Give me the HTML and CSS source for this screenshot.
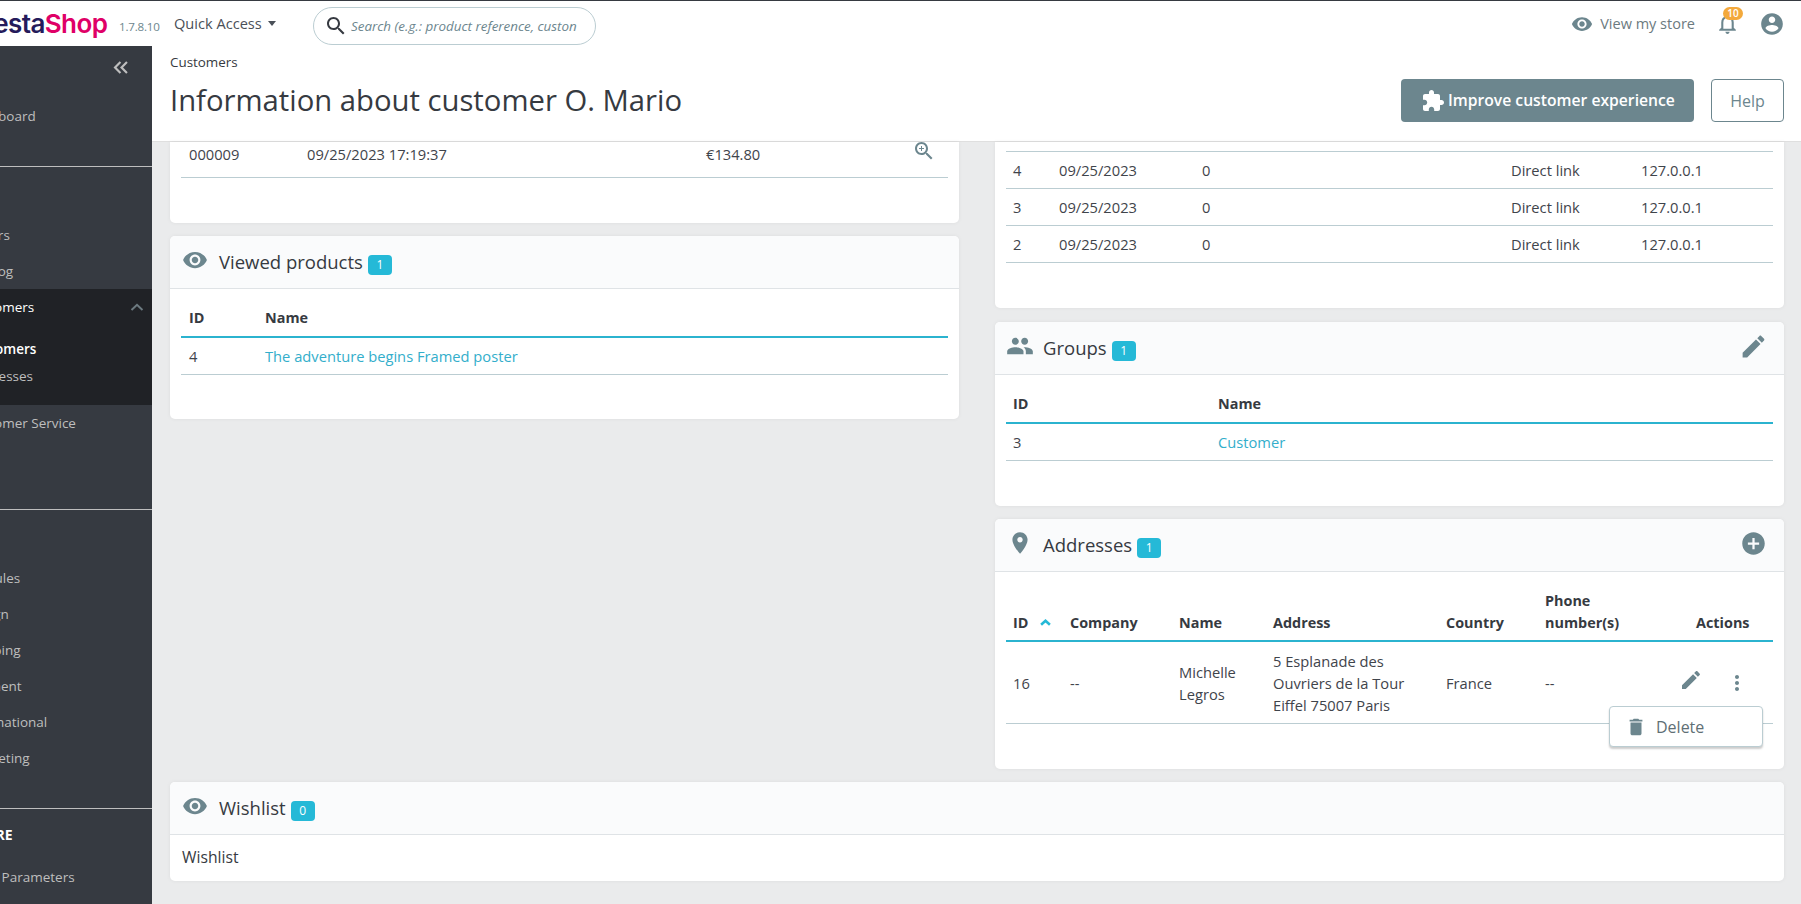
FILE: index.html
```html
<!DOCTYPE html>
<html lang="en">
<head>
<meta charset="utf-8">
<title>Information about customer O. Mario</title>
<link rel="stylesheet" href="styles.css">
</head>
<body>
<header class="topbar">
  <div class="logo"><span class="logo-a">Presta</span><span class="logo-b">Shop</span></div>
  <span class="version">1.7.8.10</span>
  <span class="quick">Quick Access<i class="caret"></i></span>
  <div class="search">
    <svg class="search-ico" viewBox="0 0 24 24"><path d="M15.5 14h-.79l-.28-.27C15.41 12.59 16 11.11 16 9.5 16 5.91 13.09 3 9.5 3S3 5.91 3 9.5 5.91 16 9.5 16c1.61 0 3.09-.59 4.23-1.57l.27.28v.79l5 4.99L20.49 19l-4.99-5zm-6 0C7.01 14 5 11.99 5 9.5S7.01 5 9.5 5 14 7.01 14 9.5 11.99 14 9.5 14z"/></svg>
    <span class="search-text">Search (e.g.: product reference, custon</span>
  </div>
  <div class="top-right">
    <svg class="store-ico" viewBox="0 0 24 24"><path d="M12 4.5C7 4.5 2.73 7.61 1 12c1.73 4.39 6 7.5 11 7.5s9.27-3.11 11-7.5c-1.73-4.39-6-7.5-11-7.5zM12 17c-2.76 0-5-2.24-5-5s2.24-5 5-5 5 2.24 5 5-2.24 5-5 5zm0-8c-1.66 0-3 1.34-3 3s1.34 3 3 3 3-1.34 3-3-1.34-3-3-3z"/></svg>
    <span class="store">View my store</span>
    <div class="bell">
      <svg class="bell-ico" viewBox="0 0 24 24"><path d="M12 22c1.1 0 2-.9 2-2h-4c0 1.1.9 2 2 2zm6-6v-5c0-3.07-1.63-5.64-4.5-6.32V4c0-.83-.67-1.5-1.5-1.5s-1.5.67-1.5 1.5v.68C7.64 5.36 6 7.92 6 11v5l-2 2v1h16v-1l-2-2zm-2 1H8v-6c0-2.48 1.51-4.5 4-4.5s4 2.02 4 4.5v6z"/></svg>
      <span class="bell-badge">10</span>
    </div>
    <svg class="account" viewBox="0 0 24 24"><path d="M12 2C6.48 2 2 6.48 2 12s4.48 10 10 10 10-4.48 10-10S17.52 2 12 2zm0 3c1.66 0 3 1.34 3 3s-1.34 3-3 3-3-1.34-3-3 1.34-3 3-3zm0 14.2c-2.5 0-4.71-1.28-6-3.22.03-1.99 4-3.08 6-3.08 1.99 0 5.97 1.09 6 3.08-1.29 1.94-3.5 3.22-6 3.22z"/></svg>
  </div>
</header>
<div class="app">
  <nav class="sidebar">
    <div class="toggle">
      <svg class="toggle-ico" viewBox="0 0 14 12"><path d="M6.5 1 1.5 6l5 5M12.5 1l-5 5 5 5"/></svg>
    </div>
    <ul class="menu">
      <li class="item first">Dashboard</li>
      <li class="rule"></li>
      <li class="head">SELL</li>
      <li class="item">Orders</li>
      <li class="item">Catalog</li>
      <li class="open">
        <div class="item item-open">Customers<svg class="chev" viewBox="0 0 14 8"><path d="M1.5 7 7 1.8 12.5 7"/></svg></div>
        <div class="sub sub-first sub-on">Customers</div>
        <div class="sub">Addresses</div>
      </li>
      <li class="item">Customer Service</li>
      <li class="item">Stats</li>
      <li class="rule"></li>
      <li class="head">IMPROVE</li>
      <li class="item">Modules</li>
      <li class="item">Design</li>
      <li class="item">Shipping</li>
      <li class="item">Payment</li>
      <li class="item">International</li>
      <li class="item">Marketing</li>
      <li class="rule"></li>
      <li class="head">CONFIGURE</li>
      <li class="item">Shop Parameters</li>
    </ul>
  </nav>
  <main class="main">
    <section class="pagehead">
      <div class="pagehead-text">
        <div class="crumb">Customers</div>
        <h1 class="title">Information about customer O. Mario</h1>
      </div>
      <div class="actions">
        <a class="btn btn-fill">
          <svg class="btn-ico" viewBox="0 0 24 24"><path d="M20.5 11H19V7c0-1.1-.9-2-2-2h-4V3.5C13 2.12 11.88 1 10.5 1S8 2.12 8 3.5V5H4c-1.1 0-1.99.9-1.99 2v3.8H3.5c1.49 0 2.7 1.21 2.7 2.7s-1.21 2.7-2.7 2.7H2V20c0 1.1.9 2 2 2h3.8v-1.5c0-1.49 1.21-2.7 2.7-2.7 1.49 0 2.7 1.21 2.7 2.7V22H17c1.1 0 2-.9 2-2v-4h1.5c1.38 0 2.5-1.12 2.5-2.5S21.88 11 20.5 11z"/></svg>
          <span class="btn-text">Improve customer experience</span>
        </a>
        <a class="btn btn-line">Help</a>
      </div>
    </section>
    <div class="content">
      <div class="col">
        <section class="card card-cut card-a">
          <table class="tbl tbl-orders">
            <colgroup><col class="oa"><col class="ob"><col class="oc"><col></colgroup>
            <tr class="cut-row">
              <td>000009</td><td>09/25/2023 17:19:37</td><td>€134.80</td>
              <td class="zoom-cell"><svg class="zoom-ico" viewBox="0 0 24 24"><path d="M15.5 14h-.79l-.28-.27C15.41 12.59 16 11.11 16 9.5 16 5.91 13.09 3 9.5 3S3 5.91 3 9.5 5.91 16 9.5 16c1.61 0 3.09-.59 4.23-1.57l.27.28v.79l5 4.99L20.49 19l-4.99-5zm-6 0C7.01 14 5 11.99 5 9.5S7.01 5 9.5 5 14 7.01 14 9.5 11.99 14 9.5 14z"/><path d="M12 10h-2v2H9v-2H7V9h2V7h1v2h2v1z"/></svg></td>
            </tr>
          </table>
        </section>
        <section class="card card-b">
          <div class="card-head">
            <span class="ico-box"><svg class="ico" viewBox="0 0 24 24"><path d="M12 4.5C7 4.5 2.73 7.61 1 12c1.73 4.39 6 7.5 11 7.5s9.27-3.11 11-7.5c-1.73-4.39-6-7.5-11-7.5zM12 17c-2.76 0-5-2.24-5-5s2.24-5 5-5 5 2.24 5 5-2.24 5-5 5zm0-8c-1.66 0-3 1.34-3 3s1.34 3 3 3 3-1.34 3-3-1.34-3-3-3z"/></svg></span>
            <h2 class="card-title">Viewed products</h2><span class="badge">1</span>
          </div>
          <table class="tbl tbl-viewed">
            <colgroup><col class="va"><col></colgroup>
            <tr class="th-row"><th>ID</th><th>Name</th></tr>
            <tr class="row"><td>4</td><td><a class="link">The adventure begins Framed poster</a></td></tr>
          </table>
        </section>
      </div>
      <div class="col col-right">
        <section class="card card-cut card-c">
          <table class="tbl tbl-visits">
            <colgroup><col class="ca"><col class="cb"><col class="cc"><col class="cd"><col></colgroup>
            <tr class="row"><td>4</td><td>09/25/2023</td><td>0</td><td>Direct link</td><td>127.0.0.1</td></tr>
            <tr class="row"><td>3</td><td>09/25/2023</td><td>0</td><td>Direct link</td><td>127.0.0.1</td></tr>
            <tr class="row"><td>2</td><td>09/25/2023</td><td>0</td><td>Direct link</td><td>127.0.0.1</td></tr>
          </table>
        </section>
        <section class="card card-d">
          <div class="card-head">
            <span class="ico-box"><svg class="ico ico-md" viewBox="0 0 24 24"><path d="M16 11c1.66 0 2.99-1.34 2.99-3S17.66 5 16 5c-1.66 0-3 1.34-3 3s1.34 3 3 3zm-8 0c1.66 0 2.99-1.34 2.99-3S9.66 5 8 5C6.34 5 5 6.34 5 8s1.34 3 3 3zm0 2c-2.33 0-7 1.17-7 3.5V19h14v-2.5c0-2.33-4.67-3.5-7-3.5zm8 0c-.29 0-.62.02-.97.05 1.16.84 1.97 1.97 1.97 3.45V19h6v-2.5c0-2.33-4.67-3.5-7-3.5z"/></svg></span>
            <h2 class="card-title">Groups</h2><span class="badge">1</span>
            <span class="head-action"><svg class="ico ico-lg" viewBox="0 0 24 24"><path d="M3 17.25V21h3.75L17.81 9.94l-3.75-3.75L3 17.25zM20.71 7.04c.39-.39.39-1.02 0-1.41l-2.34-2.34c-.39-.39-1.02-.39-1.41 0l-1.83 1.83 3.75 3.75 1.83-1.83z"/></svg></span>
          </div>
          <table class="tbl tbl-groups">
            <colgroup><col class="ga"><col></colgroup>
            <tr class="th-row"><th>ID</th><th>Name</th></tr>
            <tr class="row"><td>3</td><td><a class="link">Customer</a></td></tr>
          </table>
        </section>
        <section class="card card-e">
          <div class="card-head">
            <span class="ico-box"><svg class="ico" viewBox="0 0 24 24"><path d="M12 2C8.13 2 5 5.13 5 9c0 5.25 7 13 7 13s7-7.75 7-13c0-3.87-3.13-7-7-7zm0 9.5c-1.38 0-2.5-1.12-2.5-2.5s1.12-2.5 2.5-2.5 2.5 1.12 2.5 2.5-1.12 2.5-2.5 2.5z"/></svg></span>
            <h2 class="card-title">Addresses</h2><span class="badge">1</span>
            <span class="head-action"><svg class="ico ico-plus" viewBox="0 0 24 24"><path d="M12 2C6.48 2 2 6.48 2 12s4.48 10 10 10 10-4.48 10-10S17.52 2 12 2zm5 11h-4v4h-2v-4H7v-2h4V7h2v4h4v2z"/></svg></span>
          </div>
          <table class="tbl tbl-addr">
            <colgroup><col class="aa"><col class="ab"><col class="ac"><col class="ad"><col class="ae"><col class="af"><col></colgroup>
            <tr class="th-row th-tall">
              <th class="sorted">ID<svg class="sort" viewBox="0 0 10 6"><path d="M1 5 5 1.5 9 5"/></svg></th><th>Company</th><th>Name</th><th>Address</th><th>Country</th><th>Phone<br>number(s)</th><th class="th-actions">Actions</th>
            </tr>
            <tr class="row row-addr">
              <td>16</td><td>--</td><td>Michelle Legros</td><td>5 Esplanade des Ouvriers de la Tour Eiffel 75007 Paris</td><td>France</td><td>--</td>
              <td>
                <div class="row-actions">
                  <svg class="act-ico act-edit" viewBox="0 0 24 24"><path d="M3 17.25V21h3.75L17.81 9.94l-3.75-3.75L3 17.25zM20.71 7.04c.39-.39.39-1.02 0-1.41l-2.34-2.34c-.39-.39-1.02-.39-1.41 0l-1.83 1.83 3.75 3.75 1.83-1.83z"/></svg>
                  <svg class="act-ico" viewBox="0 0 24 24"><path d="M12 8c1.1 0 2-.9 2-2s-.9-2-2-2-2 .9-2 2 .9 2 2 2zm0 2c-1.1 0-2 .9-2 2s.9 2 2 2 2-.9 2-2-.9-2-2-2zm0 6c-1.1 0-2 .9-2 2s.9 2 2 2 2-.9 2-2-.9-2-2-2z"/></svg>
                </div>
              </td>
            </tr>
          </table>
          <div class="popup">
            <svg class="popup-ico" viewBox="0 0 24 24"><path d="M6 19c0 1.1.9 2 2 2h8c1.1 0 2-.9 2-2V7H6v12zM19 4h-3.5l-1-1h-5l-1 1H5v2h14V4z"/></svg>
            <span class="popup-text">Delete</span>
          </div>
        </section>
      </div>
      <section class="card card-wish">
        <div class="card-head">
          <span class="ico-box"><svg class="ico" viewBox="0 0 24 24"><path d="M12 4.5C7 4.5 2.73 7.61 1 12c1.73 4.39 6 7.5 11 7.5s9.27-3.11 11-7.5c-1.73-4.39-6-7.5-11-7.5zM12 17c-2.76 0-5-2.24-5-5s2.24-5 5-5 5 2.24 5 5-2.24 5-5 5zm0-8c-1.66 0-3 1.34-3 3s1.34 3 3 3 3-1.34 3-3-1.34-3-3-3z"/></svg></span>
          <h2 class="card-title">Wishlist</h2><span class="badge">0</span>
        </div>
        <div class="wish-body">Wishlist</div>
      </section>
    </div>
  </main>
</div>
</body>
</html>
```
FILE: styles.css
```css
* { box-sizing: border-box; }
html, body { margin: 0; height: 100%; }
body {
  display: flex; flex-direction: column; height: 904px; overflow: hidden;
  font-family: "Open Sans", sans-serif; font-size: 14px; color: #363a41; background: #eaebec;
}
svg { display: block; fill: #6c868e; flex: none; }

/* top bar */
.topbar {
  flex: none; height: 46px; background: #fff; border-top: 1px solid #363a41;
  display: flex; align-items: center; overflow: hidden; position: relative;
}
.logo { margin-left: -32px; width: 139px; flex: none; font-family: Inter, sans-serif; font-size: 26px; font-weight: 600; letter-spacing: -.6px; line-height: 46px; white-space: nowrap; }
.logo-a { color: #251b5b; }
.logo-b { color: #df0067; }
.version { width: 55px; flex: none; margin-left: 12px; margin-top: 5px; font-size: 11.6px; letter-spacing: -.2px; color: #6c868e; }
.quick { width: 139px; flex: none; font-size: 14.6px; color: #4a5058; display: flex; align-items: center; margin-top: -1px; }
.caret { margin-left: 6px; width: 0; height: 0; border: 4.5px solid transparent; border-top: 5px solid #4a5058; border-bottom: 0; }
.search {
  flex: none; width: 283px; height: 38px; border: 1px solid #bbcdd2; border-radius: 19px;
  display: flex; align-items: center; padding-left: 10px; margin-top: 4px;
}
.search-ico { width: 24px; height: 24px; fill: #363a41; }
.search-text { margin-left: 3px; font-size: 13.4px; font-style: italic; color: #6c868e; white-space: nowrap; overflow: hidden; width: 227px; }
.top-right { margin-left: auto; display: flex; align-items: center; margin-right: 16px; }
.store-ico { width: 22px; height: 22px; margin-right: 7px; }
.store { font-size: 14.5px; color: #6c7a80; margin-right: 20px; }
.bell { position: relative; width: 26px; height: 25px; margin-right: 18px; }
.bell-ico { width: 25px; height: 25px; }
.bell-badge {
  position: absolute; left: 8px; top: -4px; width: 20px; height: 13px; border-radius: 7px;
  background: #f3a93c; color: #fff; font-size: 10px; line-height: 13px; text-align: center; font-weight: 600;
}
.account { width: 26px; height: 26px; }

/* layout */
.app { flex: 1; min-height: 0; display: flex; }
.sidebar { flex: none; width: 152px; background: #363a41; overflow: hidden; color: #bebebe; }
.toggle { height: 43px; margin-bottom: -2px; display: flex; align-items: center; justify-content: flex-end; padding-right: 23px; }
.toggle-ico { width: 16px; height: 13px; fill: none; stroke: #bebebe; stroke-width: 2; }
.menu { list-style: none; margin: 0; padding: 0; white-space: nowrap; }
.item { height: 36px; line-height: 36px; margin-left: -34px; font-size: 13.5px; }
.first { margin-top: 11px; }
.rule { height: 1px; background: #bebebe; margin-top: 32px; }
.head { height: 50px; line-height: 52px; margin-left: -69px; font-weight: 700; color: #fff; }
.open { background: #202226; height: 116px; }
.item-open { color: #fff; font-weight: 500; position: relative; display: flex; align-items: center; }
.chev { width: 14px; height: 8px; fill: none; stroke: #6c7a80; stroke-width: 2; position: absolute; left: 164px; }
.sub { height: 27px; line-height: 27px; margin-left: -32px; font-size: 13.5px; }
.sub-first { margin-top: 11px; }
.sub-on { color: #fff; font-weight: 600; margin-left: -34px; }

.main { flex: 1; min-width: 0; display: flex; flex-direction: column; }
.pagehead {
  flex: none; height: 96px; background: #fff; border-bottom: 1px solid #dfdfdf;
  display: flex; justify-content: space-between; padding: 0 17px 0 18px;
}
.crumb { font-size: 13.4px; line-height: 18px; margin-top: 7px; }
.title { margin: 9px 0 0; font-size: 29.25px; font-weight: 400; line-height: 40px; white-space: nowrap; }
.actions { display: flex; gap: 17px; margin-top: 33px; height: 43px; }
.btn { display: flex; align-items: center; height: 43px; border-radius: 4px; font-size: 16px; }
.btn-fill { width: 293px; background: #6c868e; color: #fff; font-weight: 600; padding-left: 20px; }
.btn-text { font-size: 15.7px; margin-top: -2px; }
.btn-ico { width: 24px; height: 24px; fill: #fff; margin-right: 3px; }
.btn-line { width: 73px; justify-content: center; border: 1px solid #6c868e; color: #6c868e; }

.content { flex: 1; min-height: 0; display: grid; grid-template-columns: 789px 789px; column-gap: 36px; row-gap: 13px; padding-left: 18px; align-content: start; }
.col { display: flex; flex-direction: column; gap: 13px; }
.card { background: #fff; border-radius: 5px; box-shadow: 0 0 4px rgba(0,0,0,.06); position: relative; }
.card-cut { border-top-left-radius: 0; border-top-right-radius: 0; }
.card-a { height: 81px; }
.card-b { height: 183px; }
.card-c { height: 166px; padding-top: 9px; }
.card-d { height: 184px; margin-top: 1px; }
.card-e { height: 250px; }
.card-wish { grid-column: 1 / 3; height: 99px; }
.card-head {
  height: 53px; background: #fafbfc; border-bottom: 1px solid #dfe3e6; border-radius: 5px 5px 0 0;
  display: flex; align-items: center; padding: 0 16px 0 7px;
}
.ico-box { width: 36px; margin-right: 6px; display: flex; justify-content: center; margin-top: -4px; }
.col-right .ico-box { margin-right: 5px; margin-left: -1px; width: 37px; }
.ico { width: 26px; height: 26px; }
.ico-md { width: 28px; height: 28px; }
.ico-lg { width: 29px; height: 29px; }
.ico-plus { width: 27px; height: 27px; }
.card-title { margin: 0; font-size: 18.5px; font-weight: 500; line-height: 24px; color: #363a41; }
.badge {
  width: 24px; height: 20px; margin: 6px 0 0 5px; border-radius: 4px; background: #25b9d7;
  color: #fff; font-size: 12px; line-height: 20px; text-align: center;
}
.head-action { margin-left: auto; width: 30px; display: flex; justify-content: center; margin-top: -4px; }

.tbl { border-collapse: collapse; table-layout: fixed; margin: 0 11px; width: 767px; }
.tbl td, .tbl th { padding: 0 8px; text-align: left; font-size: 14.7px; color: #3f444b; }
.col-right .tbl td, .col-right .tbl th { padding-left: 7px; }
.tbl th { font-size: 14.4px; color: #363a41; }
.th-row th { height: 48px; vertical-align: bottom; padding-bottom: 7px; line-height: 22px; font-weight: 700; border-bottom: 2px solid #2bb3cf; }
.th-tall th { height: 69px; padding-bottom: 6px; }
.row td { height: 37px; border-bottom: 1px solid #bbcdd2; }
.row-addr td { height: 82px; line-height: 22px; padding-top: 2px; }
.cut-row td { height: 35px; padding-bottom: 11px; border-bottom: 1px solid #bbcdd2; }
.tbl-visits { border-top: 1px solid #bbcdd2; }
.tbl .link { color: #33aecb; }
.oa { width: 118px; } .ob { width: 399px; } .oc { width: 200px; }
.va { width: 76px; }
.ca { width: 46px; } .cb { width: 143px; } .cc { width: 309px; } .cd { width: 130px; }
.ga { width: 205px; }
.aa { width: 57px; } .ab { width: 109px; } .ac { width: 94px; } .ad { width: 173px; } .ae { width: 99px; } .af { width: 136px; }
.sorted { position: relative; }
.sort { width: 11px; height: 7px; fill: none; stroke: #25b9d7; stroke-width: 2.4; position: absolute; left: 34px; bottom: 14px; }
.col-right .tbl .th-actions { padding-left: 22px; }
.row-actions { display: flex; justify-content: flex-end; gap: 22px; margin-right: 16px; }
.act-ico { width: 24px; height: 24px; }
.act-edit { margin-top: -3px; }

.popup {
  position: absolute; left: 614px; top: 187px; width: 154px; height: 41px; background: #fff;
  border: 1px solid #bbcdd2; border-radius: 4px; box-shadow: 0 2px 2px rgba(0,0,0,.2);
  display: flex; align-items: center; padding-left: 15px;
}
.popup-ico { width: 22px; height: 22px; }
.popup-text { margin-left: 9px; font-size: 16px; color: #5f6f75; }
.wish-body { padding-left: 12px; line-height: 44px; font-size: 15.7px; }
.zoom-ico { width: 24px; height: 24px; margin-top: -5px; margin-left: 6px; }
```
